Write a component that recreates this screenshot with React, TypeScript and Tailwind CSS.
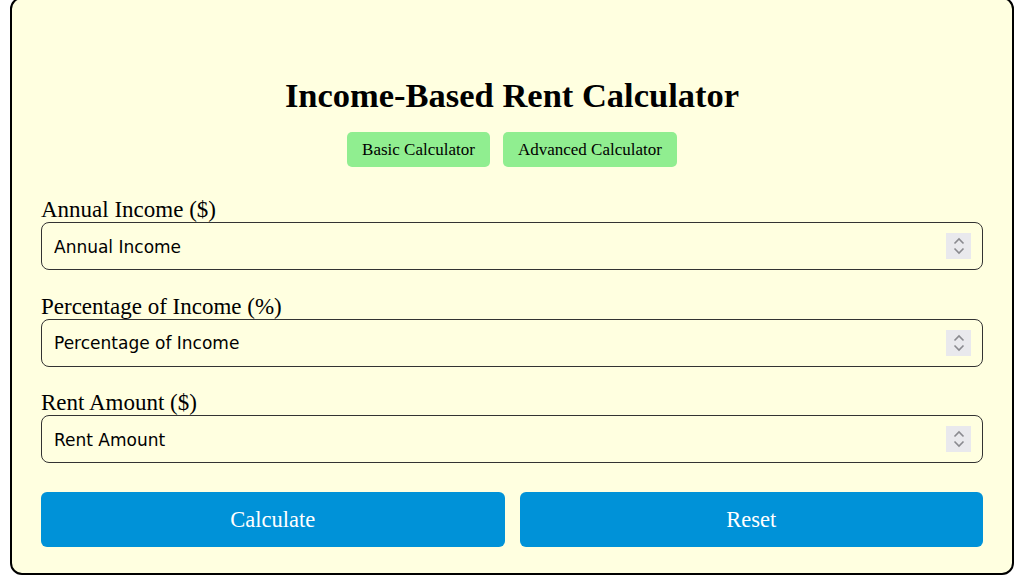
import React, { useState } from 'react';

const fields = [
  { key: 'income', label: 'Annual Income ($)', placeholder: 'Annual Income' },
  { key: 'percent', label: 'Percentage of Income (%)', placeholder: 'Percentage of Income' },
  { key: 'rent', label: 'Rent Amount ($)', placeholder: 'Rent Amount' },
];

const Spinner: React.FC = () => (
  <div className="pointer-events-none absolute right-[12px] top-1/2 flex h-[26px] w-[25px] -translate-y-1/2 flex-col items-center justify-center gap-[2px] bg-[#e9e9ed]">
    <svg width="12" height="8" viewBox="0 0 12 8" fill="none">
      <path d="M1.5 6.5 L6 2 L10.5 6.5" stroke="#8a8a8f" strokeWidth="1.6" />
    </svg>
    <svg width="12" height="8" viewBox="0 0 12 8" fill="none">
      <path d="M1.5 1.5 L6 6 L10.5 1.5" stroke="#8a8a8f" strokeWidth="1.6" />
    </svg>
  </div>
);

export default function App() {
  const [values, setValues] = useState<Record<string, string>>({ income: '', percent: '', rent: '' });

  return (
    <div className="min-h-screen bg-white font-['Liberation_Serif',serif]">
      <div className="mx-auto -mt-[3px] w-[1004px] rounded-[12px] border-2 border-black bg-[#ffffe0] px-[29px] pt-[77px] pb-[26px]">
        <h1 className="text-center text-[34.5px] font-bold leading-[38px] text-black">Income-Based Rent Calculator</h1>

        {/* calculator tabs */}
        <div className="mt-[18px] flex justify-center gap-[13px]">
          <button className="flex h-[35px] items-center rounded-[5px] bg-[#90ee90] px-[15px] text-[17px] text-black">
            Basic Calculator
          </button>
          <button className="flex h-[35px] items-center rounded-[5px] bg-[#90ee90] px-[15px] text-[17px] text-black">
            Advanced Calculator
          </button>
        </div>

        <div className="mt-[30px]">
          {fields.map((f) => (
            <div key={f.key} className="mb-[23.5px]">
              <label className="block text-[23px] leading-[25px] text-black">{f.label}</label>
              <div className="relative">
                <input
                  type="text"
                  value={values[f.key]}
                  onChange={(e) => setValues({ ...values, [f.key]: e.target.value })}
                  placeholder={f.placeholder}
                  className="block h-[48px] w-full rounded-[8px] border border-[#333] bg-transparent pt-[1px] pl-[12px] pr-[48px] font-['DejaVu_Sans',sans-serif] text-[17px] text-black placeholder:text-black outline-none"
                />
                <Spinner />
              </div>
            </div>
          ))}
        </div>

        <div className="mt-[29px] flex gap-[15px]">
          <button className="h-[55px] flex-1 rounded-[6px] bg-[#0092d8] text-[22.5px] text-white">Calculate</button>
          <button
            className="h-[55px] flex-1 rounded-[6px] bg-[#0092d8] text-[22.5px] text-white"
            onClick={() => setValues({ income: '', percent: '', rent: '' })}
          >
            Reset
          </button>
        </div>
      </div>
    </div>
  );
}
